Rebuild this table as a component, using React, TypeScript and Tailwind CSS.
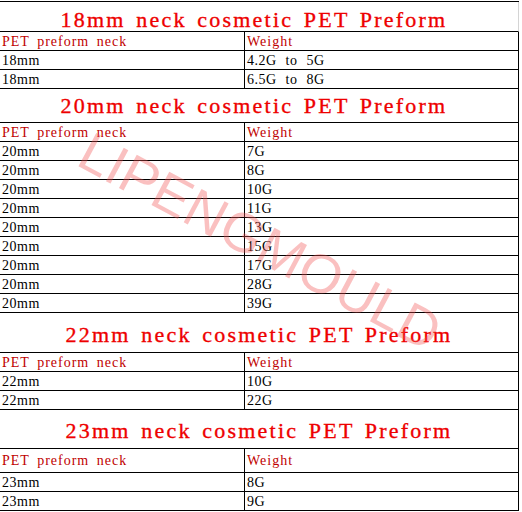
import React from 'react';

type Section = {
  title: string;
  titleCls: string;
  headCls: string;
  headPad: string;
  rows: [string, string][];
};

const sections: Section[] = [
  {
    title: '18mm neck cosmetic PET Preform',
    titleCls: 'h-[30px] pt-[7px] pr-[10px] border-r-[#d4d4d4]',
    headCls: 'h-[19px]',
    headPad: 'pt-[1px]',
    rows: [
      ['18mm', '4.2G to 5G'],
      ['18mm', '6.5G to 8G'],
    ],
  },
  {
    title: '20mm neck cosmetic PET Preform',
    titleCls: 'h-[34px] pt-[6px] pr-[10px] border-r-black',
    headCls: 'h-[19px]',
    headPad: 'pt-[1px]',
    rows: ['7G', '8G', '10G', '11G', '13G', '15G', '17G', '28G', '39G'].map(
      (w) => ['20mm', w] as [string, string]
    ),
  },
  {
    title: '22mm neck cosmetic PET Preform',
    titleCls: 'h-[40px] pt-[11px] border-r-black',
    headCls: 'h-[19px]',
    headPad: 'pt-[1px]',
    rows: [
      ['22mm', '10G'],
      ['22mm', '22G'],
    ],
  },
  {
    title: '23mm neck cosmetic PET Preform',
    titleCls: 'h-[39px] pt-[10px] border-r-black',
    headCls: 'h-[24px]',
    headPad: 'pt-[3px]',
    rows: [
      ['23mm', '8G'],
      ['23mm', '9G'],
    ],
  },
];

function Row({ left, right, cls, pad, head }: { left: string; right: string; cls: string; pad: string; head?: boolean }) {
  const text = head
    ? 'text-[#c00000] tracking-[1px] [word-spacing:3px]'
    : 'text-black tracking-[0.5px] [word-spacing:5px]';
  return (
    <div className={`flex border-b border-r border-black ${cls}`}>
      <div className={`w-[245px] shrink-0 border-r border-black pl-[2px] leading-[18px] whitespace-nowrap ${pad} ${text}`}>
        {left}
      </div>
      <div className={`flex-1 pl-[2px] leading-[18px] whitespace-nowrap ${pad} ${text}`}>{right}</div>
    </div>
  );
}

export default function App() {
  return (
    <div className="relative w-[522px] h-[512px] overflow-hidden bg-white pt-[1px] font-['Liberation_Serif',serif] text-[14px]">
      <div className="w-[519px] border-t border-black">
        {sections.map((s) => (
          <div key={s.title}>
            <div
              className={`border-b border-r border-b-black text-center text-[22px] leading-[22px] tracking-[2.2px] [word-spacing:3px] [-webkit-text-stroke:0.35px_#ee0000] text-[#ee0000] whitespace-nowrap ${s.titleCls}`}
            >
              {s.title}
            </div>
            <Row left="PET preform neck" right="Weight" cls={s.headCls} pad={s.headPad} head />
            {s.rows.map((r, i) => (
              <Row key={i} left={r[0]} right={r[1]} cls="h-[19px]" pad="pt-[1px]" />
            ))}
          </div>
        ))}
      </div>

      {/* watermark */}
      <div className="pointer-events-none absolute left-[260px] top-[242px] -translate-x-1/2 -translate-y-1/2 rotate-[28deg] whitespace-nowrap font-['Liberation_Sans',sans-serif] text-[55px] leading-none text-[rgba(240,80,80,0.36)]">
        LIPENGMOULD
      </div>
    </div>
  );
}
